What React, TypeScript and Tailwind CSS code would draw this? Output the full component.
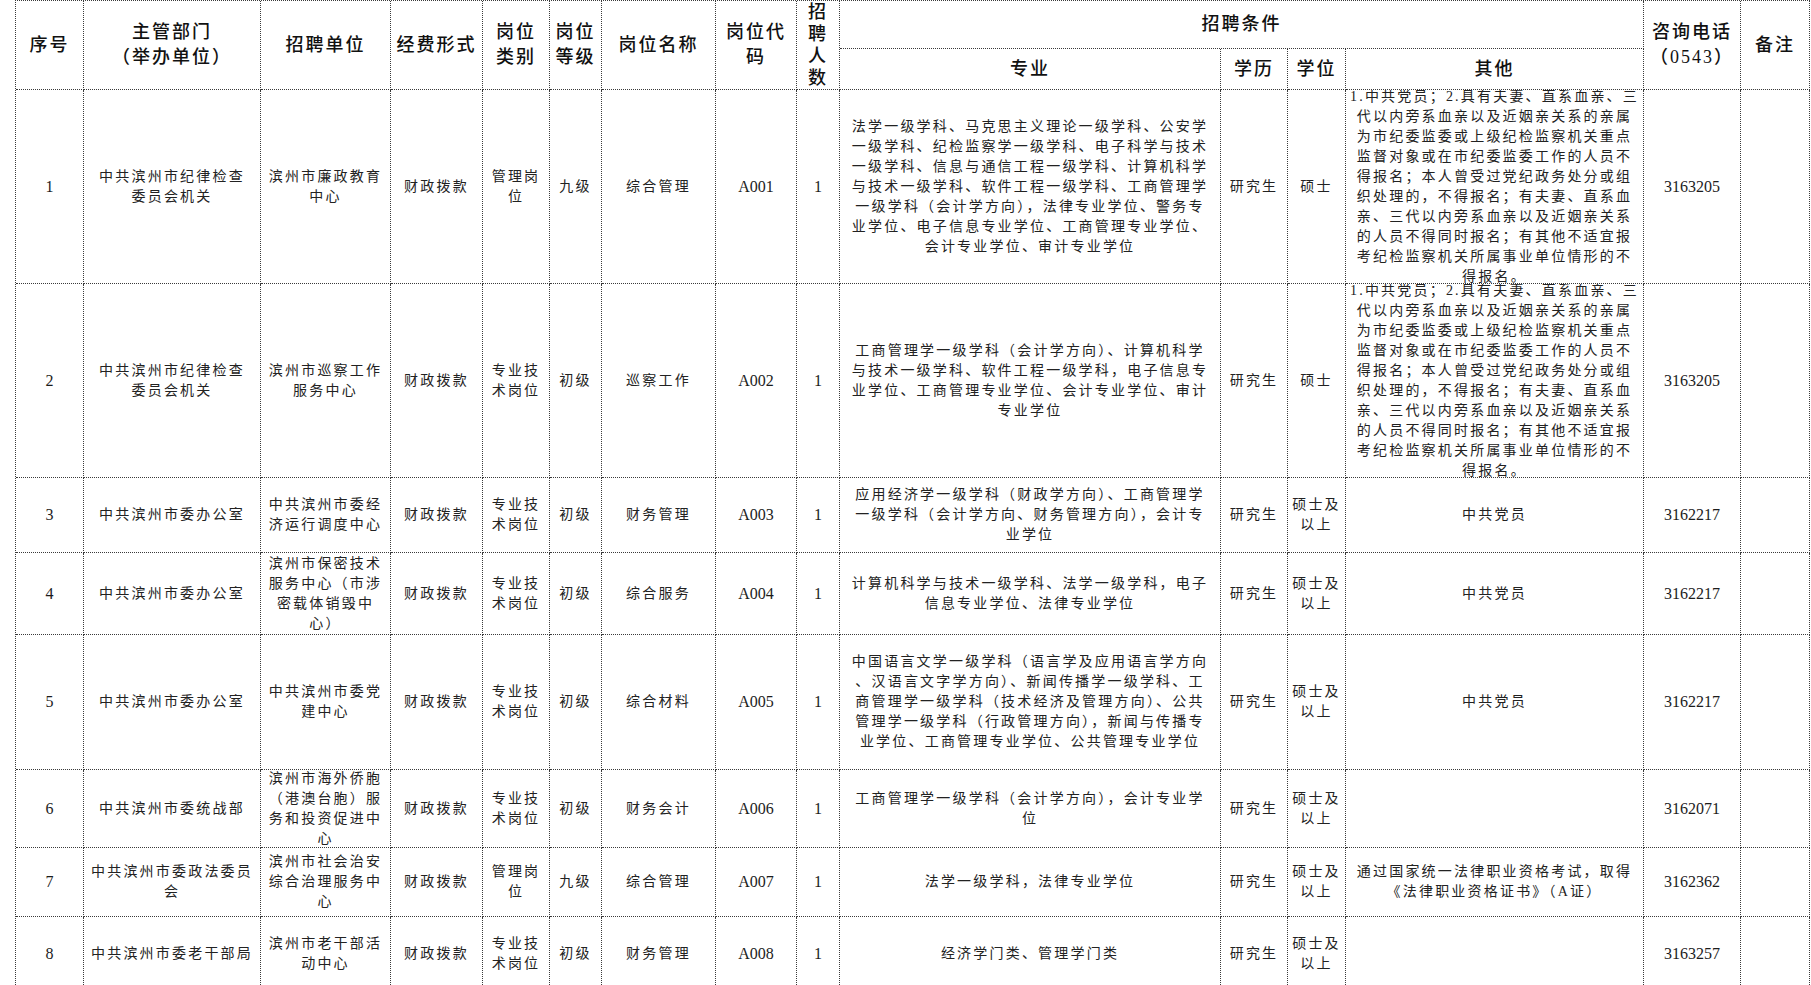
import React from 'react'

type Row = {
  no: string
  dept: string[]
  unit: string[]
  type: string[]
  level: string
  post: string
  code: string
  major: string[]
  degree: string[]
  other: string[]
  phone: string
}

const OTHER_JW = [
  '1.中共党员；2.具有夫妻、直系血亲、三',
  '代以内旁系血亲以及近姻亲关系的亲属',
  '为市纪委监委或上级纪检监察机关重点',
  '监督对象或在市纪委监委工作的人员不',
  '得报名；本人曾受过党纪政务处分或组',
  '织处理的，不得报名；有夫妻、直系血',
  '亲、三代以内旁系血亲以及近姻亲关系',
  '的人员不得同时报名；有其他不适宜报',
  '考纪检监察机关所属事业单位情形的不',
  '得报名。',
]

const ROWS: Row[] = [
  {
    no: '1', dept: ['中共滨州市纪律检查', '委员会机关'], unit: ['滨州市廉政教育', '中心'],
    type: ['管理岗', '位'], level: '九级', post: '综合管理', code: 'A001',
    major: [
      '法学一级学科、马克思主义理论一级学科、公安学',
      '一级学科、纪检监察学一级学科、电子科学与技术',
      '一级学科、信息与通信工程一级学科、计算机科学',
      '与技术一级学科、软件工程一级学科、工商管理学',
      '一级学科（会计学方向），法律专业学位、警务专',
      '业学位、电子信息专业学位、工商管理专业学位、',
      '会计专业学位、审计专业学位',
    ],
    degree: ['硕士'], other: OTHER_JW, phone: '3163205',
  },
  {
    no: '2', dept: ['中共滨州市纪律检查', '委员会机关'], unit: ['滨州市巡察工作', '服务中心'],
    type: ['专业技', '术岗位'], level: '初级', post: '巡察工作', code: 'A002',
    major: [
      '工商管理学一级学科（会计学方向）、计算机科学',
      '与技术一级学科、软件工程一级学科，电子信息专',
      '业学位、工商管理专业学位、会计专业学位、审计',
      '专业学位',
    ],
    degree: ['硕士'], other: OTHER_JW, phone: '3163205',
  },
  {
    no: '3', dept: ['中共滨州市委办公室'], unit: ['中共滨州市委经', '济运行调度中心'],
    type: ['专业技', '术岗位'], level: '初级', post: '财务管理', code: 'A003',
    major: [
      '应用经济学一级学科（财政学方向）、工商管理学',
      '一级学科（会计学方向、财务管理方向），会计专',
      '业学位',
    ],
    degree: ['硕士及', '以上'], other: ['中共党员'], phone: '3162217',
  },
  {
    no: '4', dept: ['中共滨州市委办公室'], unit: ['滨州市保密技术', '服务中心（市涉', '密载体销毁中', '心）'],
    type: ['专业技', '术岗位'], level: '初级', post: '综合服务', code: 'A004',
    major: ['计算机科学与技术一级学科、法学一级学科，电子', '信息专业学位、法律专业学位'],
    degree: ['硕士及', '以上'], other: ['中共党员'], phone: '3162217',
  },
  {
    no: '5', dept: ['中共滨州市委办公室'], unit: ['中共滨州市委党', '建中心'],
    type: ['专业技', '术岗位'], level: '初级', post: '综合材料', code: 'A005',
    major: [
      '中国语言文学一级学科（语言学及应用语言学方向',
      '、汉语言文字学方向）、新闻传播学一级学科、工',
      '商管理学一级学科（技术经济及管理方向）、公共',
      '管理学一级学科（行政管理方向），新闻与传播专',
      '业学位、工商管理专业学位、公共管理专业学位',
    ],
    degree: ['硕士及', '以上'], other: ['中共党员'], phone: '3162217',
  },
  {
    no: '6', dept: ['中共滨州市委统战部'], unit: ['滨州市海外侨胞', '（港澳台胞）服', '务和投资促进中', '心'],
    type: ['专业技', '术岗位'], level: '初级', post: '财务会计', code: 'A006',
    major: ['工商管理学一级学科（会计学方向），会计专业学', '位'],
    degree: ['硕士及', '以上'], other: [], phone: '3162071',
  },
  {
    no: '7', dept: ['中共滨州市委政法委员', '会'], unit: ['滨州市社会治安', '综合治理服务中', '心'],
    type: ['管理岗', '位'], level: '九级', post: '综合管理', code: 'A007',
    major: ['法学一级学科，法律专业学位'],
    degree: ['硕士及', '以上'],
    other: ['通过国家统一法律职业资格考试，取得', '《法律职业资格证书》（A证）'], phone: '3162362',
  },
  {
    no: '8', dept: ['中共滨州市委老干部局'], unit: ['滨州市老干部活', '动中心'],
    type: ['专业技', '术岗位'], level: '初级', post: '财务管理', code: 'A008',
    major: ['经济学门类、管理学门类'],
    degree: ['硕士及', '以上'], other: [], phone: '3163257',
  },
]

const cellBase = 'flex flex-col items-center justify-center overflow-hidden border-r border-b border-dotted border-[#3a3a3a] text-center'

function Cell({ lines, className = '' }: { lines: string[]; className?: string }) {
  return (
    <div className={`${cellBase} ${className}`}>
      {lines.map((l, i) => <div key={i} className="whitespace-nowrap">{l}</div>)}
    </div>
  )
}

// header cell
function H({ lines, className = '' }: { lines: string[]; className?: string }) {
  return <Cell lines={lines} className={`text-[18px] leading-[25px] tracking-[2px] font-medium text-[#111] ${className}`} />
}

// body cell, chinese text
function B({ lines }: { lines: string[] }) {
  return <Cell lines={lines} className="text-[14px] leading-[20px] tracking-[2.2px] font-normal text-[#222]" />
}

// body cell, numbers
function N({ text }: { text: string }) {
  return <Cell lines={[text]} className="text-[16px] leading-[20px] text-[#1c1c1c]" />
}

export default function App() {
  return (
    <div className="h-[985px] w-[1811px] overflow-hidden bg-white font-['Liberation_Serif','Noto_Sans_CJK_SC',serif]">
      <div className="ml-[15px] grid w-[1795px] grid-cols-[68px_177px_130px_92px_67px_52px_114px_81px_43px_381px_67px_58px_298px_97px_69px] grid-rows-[48px_41px_194px_194px_75px_82px_135px_78px_69px_74px] border-l border-t border-dotted border-[#3a3a3a]">
        <H lines={['序号']} className="row-span-2" />
        <H lines={['主管部门', '（举办单位）']} className="row-span-2" />
        <H lines={['招聘单位']} className="row-span-2" />
        <H lines={['经费形式']} className="row-span-2" />
        <H lines={['岗位', '类别']} className="row-span-2" />
        <H lines={['岗位', '等级']} className="row-span-2" />
        <H lines={['岗位名称']} className="row-span-2" />
        <H lines={['岗位代', '码']} className="row-span-2" />
        <H lines={['招', '聘', '人', '数']} className="row-span-2 !leading-[22px]" />
        <H lines={['招聘条件']} className="col-span-4" />
        <H lines={['咨询电话', '（0543）']} className="row-span-2" />
        <H lines={['备注']} className="row-span-2" />
        <H lines={['专业']} />
        <H lines={['学历']} />
        <H lines={['学位']} />
        <H lines={['其他']} />

        {ROWS.map(r => (
          <React.Fragment key={r.no}>
            <N text={r.no} />
            <B lines={r.dept} />
            <B lines={r.unit} />
            <B lines={['财政拨款']} />
            <B lines={r.type} />
            <B lines={[r.level]} />
            <B lines={[r.post]} />
            <N text={r.code} />
            <N text="1" />
            <B lines={r.major} />
            <B lines={['研究生']} />
            <B lines={r.degree} />
            <B lines={r.other} />
            <N text={r.phone} />
            <B lines={[]} />
          </React.Fragment>
        ))}
      </div>
    </div>
  )
}
